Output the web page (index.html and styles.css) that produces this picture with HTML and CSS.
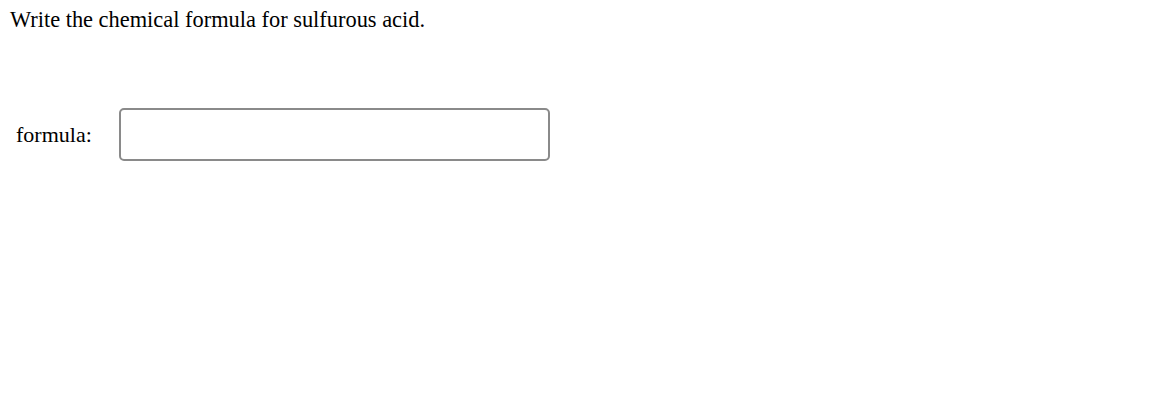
FILE: index.html
```html
<!DOCTYPE html>
<html>
<head>
<meta charset="utf-8">
<link rel="stylesheet" href="styles.css">
</head>
<body>
<p class="question">Write the chemical formula for sulfurous acid.</p>
<div class="answer-row">
  <label class="answer-label" for="formula">formula:</label>
  <input class="answer-input" id="formula" type="text">
</div>
</body>
</html>
```
FILE: styles.css
```css
html, body {
  margin: 0;
  padding: 0;
  background: #ffffff;
}
body {
  font-family: "Liberation Serif", "Times New Roman", serif;
  font-size: 22.4px;
  color: #000000;
  padding: 7px 10px;
}
.question {
  margin: 0;
  line-height: 26px;
}
.answer-row {
  display: flex;
  align-items: center;
  gap: 27px;
  margin-top: 75px;
  padding-left: 6px;
}
.answer-label {
  font-size: 22px;
  line-height: 26px;
}
.answer-input {
  box-sizing: border-box;
  width: 431px;
  height: 53px;
  border: 2px solid #8a8a8a;
  border-radius: 5px;
  background: #ffffff;
  margin: 0;
  padding: 0 8px;
  font-family: inherit;
  font-size: inherit;
}
```
